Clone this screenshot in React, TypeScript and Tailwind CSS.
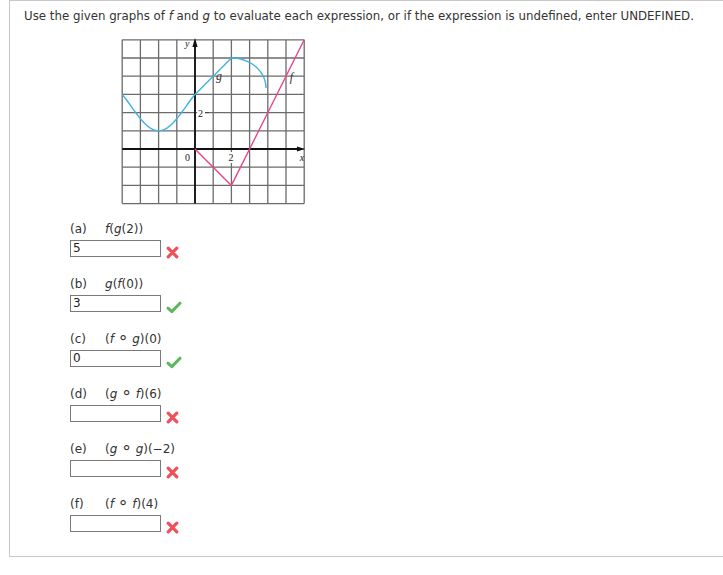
import React from "react";

const X0 = 77;
const Y0 = 113;
const C = 18.2;
const px = (x: number) => X0 + C * x;
const py = (y: number) => Y0 - C * y;

function gPath(): string {
  const pts: string[] = [];
  const k = Math.PI / 3;
  for (let i = 0; i <= 40; i++) {
    const x = -4 + (4 * i) / 40;
    const y = 2.333 - 1.333 * Math.cos(k * (x + 2));
    pts.push(`${px(x).toFixed(2)},${py(y).toFixed(2)}`);
  }
  pts.push(`${px(2).toFixed(2)},${py(5).toFixed(2)}`);
  for (let i = 1; i <= 30; i++) {
    const t = (Math.PI / 2) * (i / 30);
    const x = 2 + 1.9 * Math.sin(t);
    const y = 3.35 + 1.65 * Math.cos(t);
    pts.push(`${px(x).toFixed(2)},${py(y).toFixed(2)}`);
  }
  return "M" + pts.join(" L");
}

const G_PATH = gPath();

function Graph() {
  const vlines = [];
  for (let x = -4; x <= 6; x++) {
    vlines.push(
      <line key={"v" + x} x1={px(x)} y1={py(6)} x2={px(x)} y2={py(-3)} stroke="#6b6b6b" strokeWidth={1.3} />
    );
  }
  const hlines = [];
  for (let y = -3; y <= 6; y++) {
    hlines.push(
      <line key={"h" + y} x1={px(-4)} y1={py(y)} x2={px(6)} y2={py(y)} stroke="#6b6b6b" strokeWidth={1.3} />
    );
  }
  return (
    <svg width={190} height={172} viewBox="0 0 190 172" className="block">
      {vlines}
      {hlines}
      <line x1={px(-4)} y1={py(0)} x2={px(5.85)} y2={py(0)} stroke="#111" strokeWidth={1.8} />
      <polygon points={`${px(6.05)},${py(0)} ${px(5.6)},${py(0) - 2.6} ${px(5.6)},${py(0) + 2.6}`} fill="#111" />
      <line x1={px(0)} y1={py(-3)} x2={px(0)} y2={py(5.8)} stroke="#111" strokeWidth={1.8} />
      <polygon points={`${px(0)},${py(6.1)} ${px(0) - 2.6},${py(5.6)} ${px(0) + 2.6},${py(5.6)}`} fill="#111" />
      <rect x={px(0) + 2} y={py(2) - 6} width={8} height={12} fill="#fff" />
      <text x={px(0) + 3} y={py(2) + 4} fontSize={10} fontFamily="'Liberation Serif', serif" fill="#222">2</text>
      <line x1={px(0) + 10} y1={py(2)} x2={px(0) + 14} y2={py(2)} stroke="#444" strokeWidth={1} />
      <rect x={px(0) - 11} y={py(0) + 3} width={8} height={11} fill="#fff" />
      <text x={px(0) - 10} y={py(0) + 12} fontSize={10} fontFamily="'Liberation Serif', serif" fill="#222">0</text>
      <rect x={px(2) - 4} y={py(0) + 3} width={8} height={11} fill="#fff" />
      <text x={px(2) - 3} y={py(0) + 12} fontSize={10} fontFamily="'Liberation Serif', serif" fill="#222">2</text>
      <text x={px(5.75)} y={py(0) + 12} fontSize={10} fontStyle="italic" fontFamily="'Liberation Serif', serif" fill="#222">x</text>
      <text x={px(0) - 10} y={py(5.75) + 3} fontSize={10} fontStyle="italic" fontFamily="'Liberation Serif', serif" fill="#222">y</text>
      <path d={G_PATH} fill="none" stroke="#3fb2e6" strokeWidth={1.4} strokeLinejoin="round" />
      <polyline
        points={`${px(0)},${py(0)} ${px(2)},${py(-2)} ${px(6)},${py(6)}`}
        fill="none"
        stroke="#e8448a"
        strokeWidth={1.4}
        strokeLinejoin="round"
      />
      <text x={px(1.15)} y={py(3.8)} fontSize={12} fontStyle="italic" fontFamily="'Liberation Serif', serif" fill="#333">g</text>
      <text x={px(5.2)} y={py(3.75)} fontSize={12} fontStyle="italic" fontFamily="'Liberation Serif', serif" fill="#333">f</text>
    </svg>
  );
}

function Wrong() {
  return (
    <svg width={13} height={13} viewBox="0 0 13 13" className="block">
      <path d="M2.2 2.2 L10.8 10.8 M10.8 2.2 L2.2 10.8" stroke="#f0505a" strokeWidth={3.2} strokeLinecap="round" />
    </svg>
  );
}

function Right() {
  return (
    <svg width={16} height={13} viewBox="0 0 16 13" className="block">
      <path d="M2 7.2 L5.8 10.6 L14 2.2" fill="none" stroke="#5cb85c" strokeWidth={3} strokeLinecap="round" strokeLinejoin="round" />
    </svg>
  );
}

type Item = { letter: string; expr: React.ReactNode; value: string; ok: boolean };

const I = ({ children }: { children: React.ReactNode }) => <i>{children}</i>;
const O = () => <span className="text-[17px] leading-[0]">∘</span>;

const items: Item[] = [
  { letter: "(a)", expr: <><I>f</I>(<I>g</I>(2))</>, value: "5", ok: false },
  { letter: "(b)", expr: <><I>g</I>(<I>f</I>(0))</>, value: "3", ok: true },
  { letter: "(c)", expr: <>(<I>f</I> <O /> <I>g</I>)(0)</>, value: "0", ok: true },
  { letter: "(d)", expr: <>(<I>g</I> <O /> <I>f</I>)(6)</>, value: "", ok: false },
  { letter: "(e)", expr: <>(<I>g</I> <O /> <I>g</I>)(−2)</>, value: "", ok: false },
  { letter: "(f)", expr: <>(<I>f</I> <O /> <I>f</I>)(4)</>, value: "", ok: false },
];

export default function App() {
  return (
    <div className="bg-white w-[723px] h-[575px] overflow-hidden" style={{ fontFamily: "'DejaVu Sans', Verdana, sans-serif" }}>
      <div className="ml-[9px] w-[730px] h-[557px] border border-[#c8c8c8] text-[#333]">
        <div className="pl-[14px] pt-[7px] text-[11.8px] leading-[16px]">
          Use the given graphs of <i>f</i> and <i>g</i> to evaluate each expression, or if the expression is undefined, enter UNDEFINED.
        </div>
        <div className="ml-[108px] mt-[12px]">
          <Graph />
        </div>
        <div className="ml-[60px] mt-[13px] flex flex-col gap-[19px]">
          {items.map((it) => (
            <div key={it.letter} className="flex flex-col">
              <div className="flex h-[16px] text-[12px] leading-[16px] text-[#333]">
                <span className="w-[35px]">{it.letter}</span>
                <span>{it.expr}</span>
              </div>
              <div className="flex items-end mt-[3px]">
                <div className="w-[91px] h-[17px] border border-[#7a7a7a] bg-white text-[12px] leading-[15px] pl-[2px] text-[#222]">
                  {it.value}
                </div>
                <div className="ml-[5px] mb-[-2px]">{it.ok ? <Right /> : <Wrong />}</div>
              </div>
            </div>
          ))}
        </div>
      </div>
    </div>
  );
}
